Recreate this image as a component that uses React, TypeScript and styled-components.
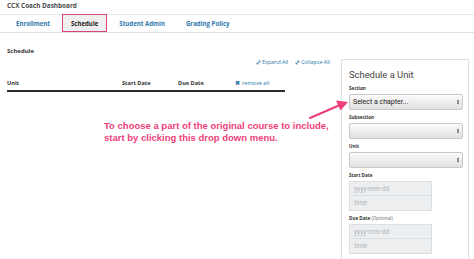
import React from 'react';
import styled, { createGlobalStyle } from 'styled-components';
import { MoveDiagonal } from 'lucide-react';

const GlobalStyle = createGlobalStyle`
  html, body {
    margin: 0;
    padding: 0;
    background: #fff;
    overflow: hidden;
  }
  body {
    font-family: 'Open Sans', 'Liberation Sans', sans-serif;
    color: #333;
  }
`;

const Page = styled.div`
  position: relative;
  width: 474px;
  height: 259px;
  overflow: hidden;
`;

const Header = styled.div`
  height: 14px;
  padding: 0 7px;
  border-bottom: 1px solid #e6e6e6;
  font-size: 6.4px;
  font-weight: 700;
  line-height: 12px;
  color: #4a4a4a;
`;

const TabBar = styled.div`
  display: flex;
  height: 17px;
  padding-left: 7px;
  border-bottom: 1px solid #e2e2e2;
  gap: 3px;
`;

const Tab = styled.div<{ active?: boolean }>`
  display: flex;
  align-items: center;
  padding: 0 8px;
  margin-top: ${(p) => (p.active ? '-1px' : '0')};
  font-size: 6.1px;
  font-weight: 700;
  color: ${(p) => (p.active ? '#222' : '#2b78ad')};
  background: ${(p) => (p.active ? '#efefef' : 'transparent')};
  border: ${(p) => (p.active ? '1.5px solid #d6457f' : '1.5px solid transparent')};
  box-sizing: border-box;
`;

const Body = styled.div`
  display: flex;
  gap: 11px;
  padding-left: 7px;
`;

const MainCol = styled.div`
  width: 323px;
  display: flex;
  flex-direction: column;
`;

const SectionTitle = styled.div`
  margin-top: 13px;
  line-height: 10px;
  font-size: 6px;
  font-weight: 700;
  color: #333;
`;

const ToolRow = styled.div`
  display: flex;
  justify-content: flex-end;
  gap: 7px;
  margin-top: 2px;
  line-height: 8px;
`;

const ToolLink = styled.span`
  display: inline-flex;
  align-items: center;
  gap: 1px;
  font-size: 5.4px;
  color: #2b78ad;
`;

const Table = styled.div`
  width: 278px;
  margin-top: 11px;
`;

const HeadRow = styled.div`
  display: grid;
  grid-template-columns: 115px 56px 57px 1fr;
  line-height: 12px;
  font-size: 5.6px;
  font-weight: 700;
  color: #333;
  border-bottom: 2px solid #2a2a2a;
  padding-bottom: 1px;
`;

const RemoveAll = styled.span`
  font-weight: 400;
  color: #2b78ad;
  b {
    font-weight: 700;
    margin-right: 2px;
  }
`;

const Panel = styled.div`
  width: 128px;
  height: 230px;
  margin-top: 26px;
  padding: 9px 6px 0 7px;
  border: 1px solid #dedede;
  box-sizing: border-box;
  display: flex;
  flex-direction: column;
`;

const PanelTitle = styled.div`
  font-family: Roboto, 'Open Sans', sans-serif;
  font-size: 9.4px;
  line-height: 12px;
  color: #444;
`;

const Label = styled.div`
  margin: 3px 0 2px;
  line-height: 8px;
  font-size: 4.6px;
  font-weight: 700;
  color: #333;
  span {
    font-weight: 400;
    color: #666;
  }
`;

const Select = styled.div`
  position: relative;
  height: 16px;
  width: 114px;
  box-sizing: border-box;
  border: 1px solid #c9c9c9;
  border-radius: 2px;
  background: linear-gradient(#fbfbfb, #e1e1e1);
  display: flex;
  align-items: center;
  padding-left: 3px;
  font-family: Roboto, 'Open Sans', sans-serif;
  font-size: 7px;
  color: #222;
`;

const Arrows = styled.span`
  position: absolute;
  right: 3px;
  top: 50%;
  transform: translateY(-50%);
  display: flex;
  flex-direction: column;
  align-items: center;
  gap: 1px;
  i {
    width: 0;
    height: 0;
    border-left: 1.5px solid transparent;
    border-right: 1.5px solid transparent;
  }
  i:first-child {
    border-bottom: 2px solid #222;
  }
  i:last-child {
    border-top: 2px solid #222;
  }
`;

const DateBox = styled.div`
  width: 83px;
  display: flex;
  flex-direction: column;
`;

const DateInput = styled.div`
  height: 15px;
  box-sizing: border-box;
  border: 1px solid #dcdfe2;
  background: #eceef0;
  display: flex;
  align-items: center;
  padding-left: 4px;
  font-family: Roboto, 'Open Sans', sans-serif;
  font-size: 6.6px;
  color: #b0b4b8;
  & + & {
    border-top: none;
  }
`;

const Note = styled.div`
  position: absolute;
  left: 104px;
  top: 120px;
  font-family: 'Liberation Sans', Arial, sans-serif;
  font-weight: 700;
  font-size: 9.5px;
  line-height: 12px;
  color: #ef3f7a;
`;

const Pointer = styled.svg`
  position: absolute;
  left: 300px;
  top: 92px;
`;

const Dropdown = ({ text }: { text?: string }) => (
  <Select>
    {text}
    <Arrows>
      <i />
      <i />
    </Arrows>
  </Select>
);

const DateFields = () => (
  <DateBox>
    <DateInput>yyyy-mm-dd</DateInput>
    <DateInput>time</DateInput>
  </DateBox>
);

export default function App() {
  return (
    <Page>
      <GlobalStyle />
      <Header>CCX Coach Dashboard</Header>
      <TabBar>
        <Tab>Enrollment</Tab>
        <Tab active>Schedule</Tab>
        <Tab>Student Admin</Tab>
        <Tab>Grading Policy</Tab>
      </TabBar>
      <Body>
        <MainCol>
          <SectionTitle>Schedule</SectionTitle>
          <ToolRow>
            <ToolLink>
              <MoveDiagonal size={5} strokeWidth={3.5} />
              Expand All
            </ToolLink>
            <ToolLink>
              <MoveDiagonal size={5} strokeWidth={3.5} />
              Collapse All
            </ToolLink>
          </ToolRow>
          <Table>
            <HeadRow>
              <span>Unit</span>
              <span>Start Date</span>
              <span>Due Date</span>
              <RemoveAll>
                <b>✖</b>remove all
              </RemoveAll>
            </HeadRow>
          </Table>
        </MainCol>
        <Panel>
          <PanelTitle>Schedule a Unit</PanelTitle>
          <Label>Section</Label>
          <Dropdown text="Select a chapter..." />
          <Label>Subsection</Label>
          <Dropdown />
          <Label>Unit</Label>
          <Dropdown />
          <Label>Start Date</Label>
          <DateFields />
          <Label>
            Due Date <span>(Optional)</span>
          </Label>
          <DateFields />
        </Panel>
      </Body>
      <Note>
        To choose a part of the original course to include,
        <br />
        start by clicking this drop down menu.
      </Note>
      <Pointer width="52" height="32" viewBox="0 0 52 32">
        <line x1="10" y1="26" x2="40" y2="13" stroke="#ef3f7a" strokeWidth="2" strokeLinecap="round" />
        <polygon points="48,10 36,8.5 40.5,18.5" fill="#ef3f7a" />
      </Pointer>
    </Page>
  );
}
